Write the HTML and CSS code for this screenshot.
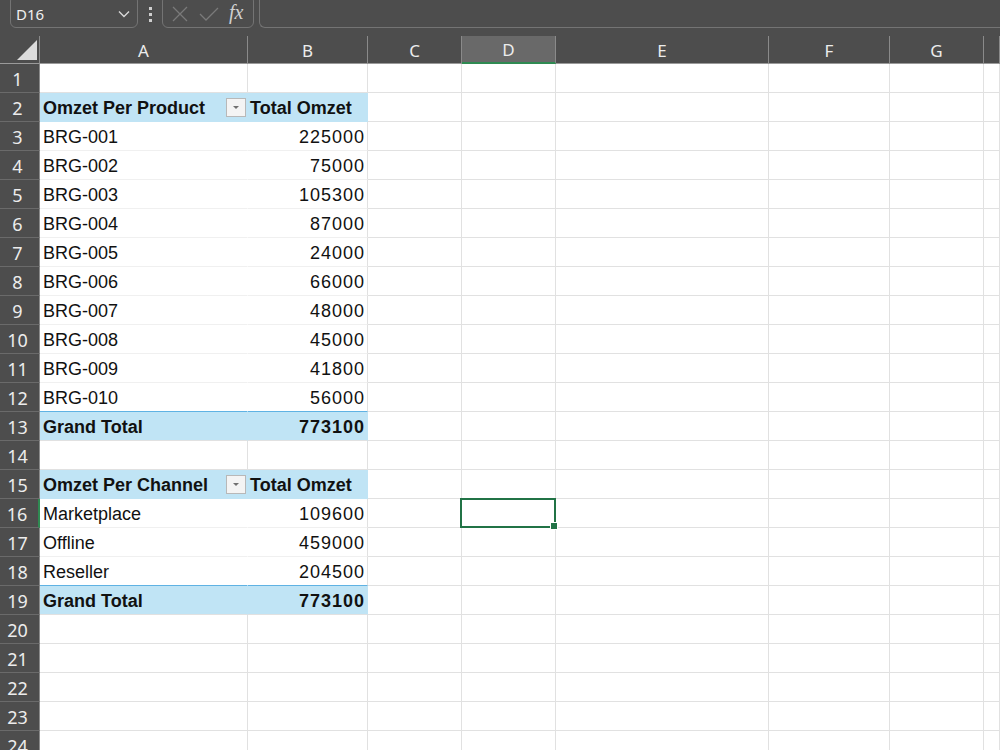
FILE: index.html
```html
<!DOCTYPE html>
<html lang="en">
<head>
    <meta charset="UTF-8">
    <title>Omzet - Pivot</title>
    <link rel="stylesheet" href="styles.css">
</head>
<body>
    <div class="topbar">
        <div class="name-box">
            <span>D16</span>
            <svg class="chevron" width="12" height="8" viewBox="0 0 12 8"><path d="M1 1.5 L6 6.5 L11 1.5" fill="none" stroke="#d8d8d8" stroke-width="1.4"/></svg>
        </div>
        <div class="dots"><i></i><i></i><i></i></div>
        <div class="fx-box">
            <svg width="18" height="18" viewBox="0 0 18 18"><path d="M2 2 L16 16 M16 2 L2 16" stroke="#7a7a7a" stroke-width="1.3"/></svg>
            <svg width="20" height="18" viewBox="0 0 20 18"><path d="M1 9 L7 15 L19 3" fill="none" stroke="#7a7a7a" stroke-width="1.3"/></svg>
            <span class="fx">fx</span>
        </div>
        <div class="formula-input"></div>
    </div>

    <div class="sheet" id="sheet"></div>

    <script>
        const columns = ['A', 'B', 'C', 'D', 'E', 'F', 'G', ''];
        const rows = {
            2: ['Omzet Per Product', 'Total Omzet', 'head'],
            3: ['BRG-001', '225000'],
            4: ['BRG-002', '75000'],
            5: ['BRG-003', '105300'],
            6: ['BRG-004', '87000'],
            7: ['BRG-005', '24000'],
            8: ['BRG-006', '66000'],
            9: ['BRG-007', '48000'],
            10: ['BRG-008', '45000'],
            11: ['BRG-009', '41800'],
            12: ['BRG-010', '56000', 'last'],
            13: ['Grand Total', '773100', 'total'],
            15: ['Omzet Per Channel', 'Total Omzet', 'head'],
            16: ['Marketplace', '109600'],
            17: ['Offline', '459000'],
            18: ['Reseller', '204500', 'last'],
            19: ['Grand Total', '773100', 'total']
        };

        const sheet = document.getElementById('sheet');
        let html = '<div class="corner"><span></span></div>';
        columns.forEach(c => {
            html += `<div class="col-head${c === 'D' ? ' active' : ''}">${c}</div>`;
        });

        for (let r = 1; r <= 24; r++) {
            html += `<div class="row-head${r === 16 ? ' active' : ''}">${r}</div>`;
            const row = rows[r];
            columns.forEach((c, i) => {
                let cls = 'cell';
                let text = '';
                if (row && i < 2) {
                    cls += ' pivot ' + (row[2] || 'body');
                    cls += i === 1 ? ' num' : ' first';
                    text = row[i];
                    if (row[2] === 'head' && i === 0) {
                        text += '<span class="filter"></span>';
                    }
                }
                if (r === 16 && c === 'D') cls += ' selected';
                html += `<div class="${cls}">${text}</div>`;
            });
        }
        sheet.innerHTML = html;
    </script>
</body>
</html>
```

FILE: styles.css
```css
* {
    box-sizing: border-box;
}

body {
    margin: 0;
    width: 1000px;
    height: 750px;
    overflow: hidden;
    background: #4d4d4d;
    font-family: 'Liberation Sans', Arial, sans-serif;
}

/* formula bar */
.topbar {
    height: 36px;
    display: flex;
    align-items: flex-start;
    padding-left: 10px;
}

.name-box,
.fx-box,
.formula-input {
    height: 33px;
    margin-top: -5px;
    border: 1px solid #747474;
    border-radius: 6px;
    display: flex;
    align-items: center;
    padding-top: 5px;
}

.name-box {
    width: 128px;
    justify-content: space-between;
    padding-left: 5px;
    padding-right: 7px;
    color: #f0f0f0;
    font-family: 'Noto Sans', sans-serif;
    font-size: 15px;
}

.dots {
    width: 24px;
    display: flex;
    flex-direction: column;
    align-items: center;
    gap: 3px;
    padding-top: 7px;
}

.dots i {
    width: 3px;
    height: 3px;
    background: #cfcfcf;
}

.fx-box {
    width: 92px;
    gap: 10px;
    padding-left: 8px;
}

.fx {
    font-family: 'Liberation Serif', serif;
    font-style: italic;
    font-size: 20px;
    color: #d0d0d0;
    margin-top: -4px;
}

.formula-input {
    flex: 1;
    margin-left: 5px;
    border-right: none;
    border-radius: 6px 0 0 6px;
}

/* grid */
.sheet {
    display: grid;
    grid-template-columns: 40px 208px 120px 94px 94px 213px 121px 94px 1fr;
    grid-template-rows: 28px;
    grid-auto-rows: 29px;
    background: #fff;
}

.corner {
    background: #4d4d4d;
    border-right: 1px solid #8a8a8a;
    border-bottom: 1px solid #9a9a9a;
    position: relative;
}

.corner span {
    position: absolute;
    left: 17px;
    top: 4px;
    width: 20px;
    height: 20px;
    background: #dcdcdc;
    clip-path: polygon(100% 0, 100% 100%, 0 100%);
}

.col-head {
    background: #4d4d4d;
    border-right: 1px solid #8a8a8a;
    border-bottom: 1px solid #9a9a9a;
    color: #ececec;
    font-family: 'Noto Sans', sans-serif;
    font-size: 17px;
    display: flex;
    align-items: center;
    justify-content: center;
    padding-top: 1px;
}

.col-head:last-child {
    border-right: none;
}

.col-head.active {
    background: #696969;
    border-bottom: 2px solid #2f8a52;
}

.row-head {
    background: #4d4d4d;
    border-right: 1px solid #8a8a8a;
    border-bottom: 1px solid #6a6a6a;
    color: #ececec;
    font-family: 'Noto Sans', sans-serif;
    font-size: 18px;
    display: flex;
    align-items: center;
    justify-content: center;
    padding-right: 4px;
    padding-top: 1px;
}

.row-head.active {
    border-right: 2px solid #2f8a52;
}

.cell {
    border-right: 1px solid #e1e1e1;
    border-bottom: 1px solid #e1e1e1;
    color: #111;
    font-size: 18px;
    display: flex;
    align-items: center;
    padding: 2px 3px 0;
    white-space: nowrap;
    position: relative;
}

.cell.pivot.first {
    border-right-color: transparent;
}

.cell.pivot.body {
    border-bottom-color: #f0f0f0;
}

.cell.pivot.head,
.cell.pivot.total {
    background: #c0e4f5;
    border-bottom-color: #c0e4f5;
    font-weight: bold;
}

.cell.pivot.head.num,
.cell.pivot.total.num {
    border-right-color: #c0e4f5;
}

.cell.pivot.total {
    border-bottom-color: #e1e1e1;
}

.cell.pivot.last {
    border-bottom-color: #5fb2e3;
}

.cell.num {
    justify-content: flex-end;
}

.cell.pivot.body.num,
.cell.pivot.last.num,
.cell.pivot.total.num {
    letter-spacing: 1px;
    padding-right: 2px;
}

.cell.pivot.head.num {
    justify-content: flex-start;
    padding-left: 2px;
}

.filter {
    position: absolute;
    right: 1px;
    top: 5px;
    width: 20px;
    height: 19px;
    background: #f4f4f4;
    border: 1px solid #b8b8b8;
}

.filter::after {
    content: '';
    position: absolute;
    left: 6px;
    top: 7px;
    border-left: 3px solid transparent;
    border-right: 3px solid transparent;
    border-top: 3px solid #707070;
}

.cell.selected::after {
    content: '';
    position: absolute;
    left: -2px;
    top: -1px;
    right: -1px;
    bottom: -1px;
    border: 2px solid #217346;
}

.cell.selected::before {
    content: '';
    position: absolute;
    right: -3px;
    bottom: -3px;
    width: 6px;
    height: 6px;
    background: #217346;
    border: 1px solid #fff;
    z-index: 1;
}
```
